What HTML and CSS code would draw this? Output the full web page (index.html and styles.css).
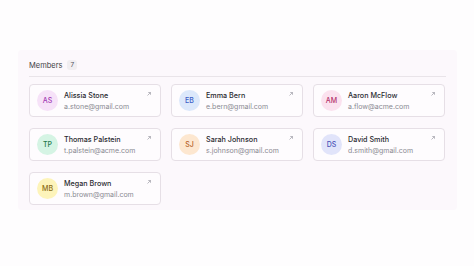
FILE: index.html
```html
<!DOCTYPE html>
<html lang="en">
  <head>
    <meta charset="UTF-8" />
    <title>Members</title>
    <link rel="stylesheet" href="styles.css">
  </head>
  <body>
    <div class="panel">
      <div class="panel-head">
        <span class="title">Members</span>
        <span class="count">7</span>
      </div>

      <div class="grid">
        <div class="card">
          <span class="avatar av-pink">AS</span>
          <div class="info">
            <div class="name">Alissia Stone</div>
            <div class="email">a.stone@gmail.com</div>
          </div>
          <svg class="arrow" viewBox="0 0 8 8"><path d="M2 6L6 2M3 2h3v3" /></svg>
        </div>
        <div class="card">
          <span class="avatar av-blue">EB</span>
          <div class="info">
            <div class="name">Emma Bern</div>
            <div class="email">e.bern@gmail.com</div>
          </div>
          <svg class="arrow" viewBox="0 0 8 8"><path d="M2 6L6 2M3 2h3v3" /></svg>
        </div>
        <div class="card">
          <span class="avatar av-rose">AM</span>
          <div class="info">
            <div class="name">Aaron McFlow</div>
            <div class="email">a.flow@acme.com</div>
          </div>
          <svg class="arrow" viewBox="0 0 8 8"><path d="M2 6L6 2M3 2h3v3" /></svg>
        </div>
        <div class="card">
          <span class="avatar av-green">TP</span>
          <div class="info">
            <div class="name">Thomas Palstein</div>
            <div class="email">t.palstein@acme.com</div>
          </div>
          <svg class="arrow" viewBox="0 0 8 8"><path d="M2 6L6 2M3 2h3v3" /></svg>
        </div>
        <div class="card">
          <span class="avatar av-orange">SJ</span>
          <div class="info">
            <div class="name">Sarah Johnson</div>
            <div class="email">s.johnson@gmail.com</div>
          </div>
          <svg class="arrow" viewBox="0 0 8 8"><path d="M2 6L6 2M3 2h3v3" /></svg>
        </div>
        <div class="card">
          <span class="avatar av-indigo">DS</span>
          <div class="info">
            <div class="name">David Smith</div>
            <div class="email">d.smith@gmail.com</div>
          </div>
          <svg class="arrow" viewBox="0 0 8 8"><path d="M2 6L6 2M3 2h3v3" /></svg>
        </div>
        <div class="card">
          <span class="avatar av-yellow">MB</span>
          <div class="info">
            <div class="name">Megan Brown</div>
            <div class="email">m.brown@gmail.com</div>
          </div>
          <svg class="arrow" viewBox="0 0 8 8"><path d="M2 6L6 2M3 2h3v3" /></svg>
        </div>
      </div>
    </div>
  </body>
</html>
```

FILE: styles.css
```css
body {
  margin: 0;
  padding: 50px 17px 0 18px;
  background: #fefdfe;
  font-family: 'Inter', 'Noto Sans', sans-serif;
  color: #27272a;
}

.panel {
  background: #fcf8fc;
  border-radius: 4px;
  padding: 8px 11px 5px 11px;
}

.panel-head {
  display: flex;
  align-items: center;
  gap: 5px;
  height: 14px;
  padding-bottom: 4px;
  border-bottom: 1px solid #e9e4e9;
  margin-bottom: 7px;
}

.title {
  font-size: 7.5px;
  color: #3f3f46;
}

.count {
  font-size: 6.5px;
  color: #52525b;
  background: #f1eef1;
  border-radius: 3px;
  padding: 1px 3px;
}

.grid {
  display: grid;
  grid-template-columns: repeat(3, 132px);
  column-gap: 10px;
  row-gap: 11px;
}

.card {
  position: relative;
  display: flex;
  align-items: center;
  gap: 6px;
  height: 31px;
  padding: 0 7px;
  background: #fefcfe;
  border: 1px solid #e6dfe6;
  border-radius: 4px;
}

.avatar {
  flex: none;
  width: 21px;
  height: 21px;
  border-radius: 50%;
  display: flex;
  align-items: center;
  justify-content: center;
  font-size: 7px;
  font-weight: 500;
}

.av-pink { background: #f6e2f8; color: #a23bb4; }
.av-blue { background: #dce8fb; color: #3c5ec6; }
.av-rose { background: #fbe2ef; color: #b3326c; }
.av-green { background: #d5f4e4; color: #1f7a4c; }
.av-orange { background: #fde7d0; color: #b5622a; }
.av-indigo { background: #e1e4fa; color: #4a52b8; }
.av-yellow { background: #fdf4ba; color: #8a6a10; }

.info {
  display: flex;
  flex-direction: column;
  gap: 2px;
}

.name {
  font-size: 7.2px;
  font-weight: 500;
  color: #2a2a30;
}

.email {
  font-size: 7px;
  color: #8a8a92;
}

.arrow {
  position: absolute;
  top: 6px;
  right: 8px;
  width: 6px;
  height: 6px;
  fill: none;
  stroke: #a1a1aa;
  stroke-width: 1;
}
```
